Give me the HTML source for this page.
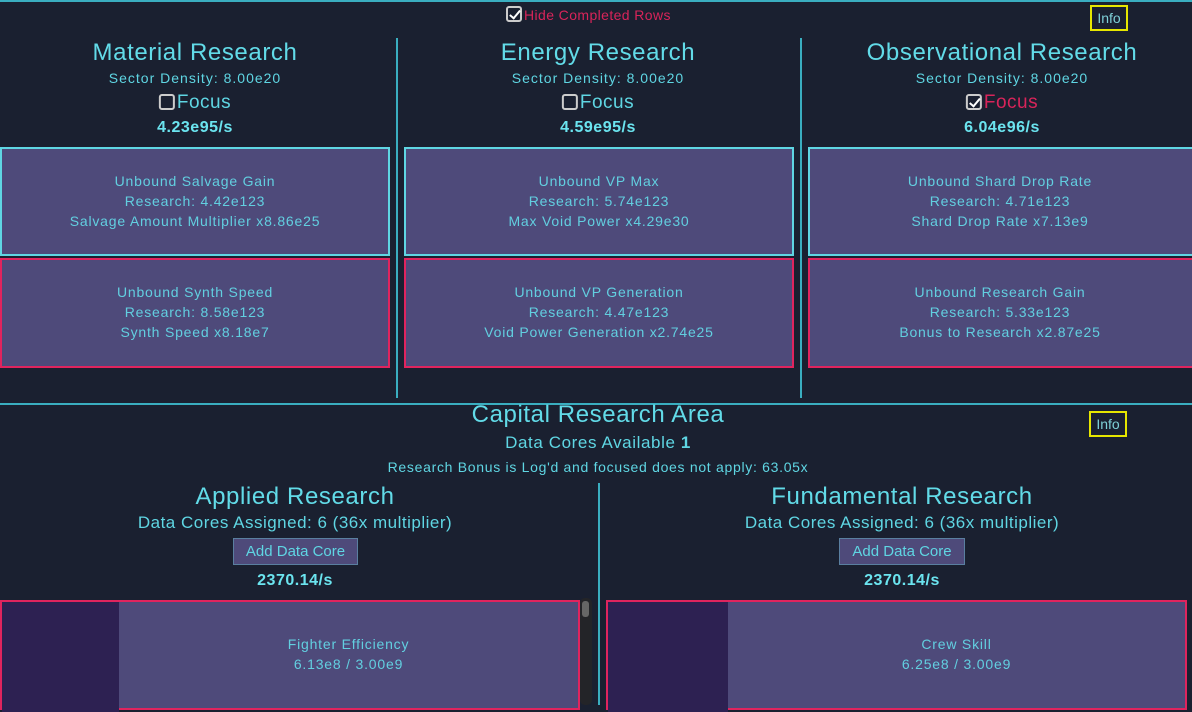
<!DOCTYPE html>
<html><head><meta charset="utf-8"><style>
*{margin:0;padding:0;box-sizing:border-box}
body{width:1192px;height:705px;overflow:hidden;background:#1a2030;font-family:"Liberation Sans",sans-serif;color:#5fd6e3;position:relative}
.a{position:absolute;white-space:nowrap}
.c{text-align:center;transform:translateX(-50%)}
.t{font-size:24px;color:#62dbe8;letter-spacing:0.6px}
.s{font-size:14px;letter-spacing:1px}
.f{font-size:19px;letter-spacing:0.5px}
.r{font-size:16px;font-weight:bold;color:#6be4ef;letter-spacing:0.5px}
.box{position:absolute;background:#4e4a7a;border:2px solid #5fd6e3;text-align:center;font-size:14px;color:#62cfe0;line-height:20px;padding-top:22px;letter-spacing:0.8px}
.red{border-color:#e0245e}
.cb{display:inline-block;width:16px;height:16px;border:2px solid #ccc;border-radius:3px;vertical-align:-2px;margin-right:2px;position:relative}
.cb.k::after{content:"";position:absolute;left:4px;top:0px;width:4px;height:9px;border:solid #fff;border-width:0 2px 2px 0;transform:rotate(40deg)}
.info{position:absolute;border:2px solid #e6e600;color:#7fd0d8;font-size:14px;text-align:center;line-height:22px}
.line{position:absolute;background:#3aaec0}
</style></head><body>
<div class="line" style="left:0;top:0;width:1192px;height:2px"></div>
<div class="a" style="left:506px;top:6px;font-size:14px;color:#d8245a;letter-spacing:0.4px"><span class="cb k"></span>Hide Completed Rows</div>
<div class="info" style="left:1090px;top:5px;width:38px;height:26px">Info</div>
<div class="line" style="left:396px;top:38px;width:2px;height:360px"></div>
<div class="line" style="left:800px;top:38px;width:2px;height:360px"></div>

<div class="a c t" style="left:195px;top:39px">Material Research</div>
<div class="a c s" style="left:195px;top:70px">Sector Density: 8.00e20</div>
<div class="a c f" style="left:195px;top:92px"><span class="cb"></span>Focus</div>
<div class="a c r" style="left:195px;top:119px">4.23e95/s</div>
<div class="box" style="left:0;top:147px;width:390px;height:109px">Unbound Salvage Gain<br>Research: 4.42e123<br>Salvage Amount Multiplier x8.86e25</div>
<div class="box red" style="left:0;top:258px;width:390px;height:110px">Unbound Synth Speed<br>Research: 8.58e123<br>Synth Speed x8.18e7</div>

<div class="a c t" style="left:598px;top:39px">Energy Research</div>
<div class="a c s" style="left:598px;top:70px">Sector Density: 8.00e20</div>
<div class="a c f" style="left:598px;top:92px"><span class="cb"></span>Focus</div>
<div class="a c r" style="left:598px;top:119px">4.59e95/s</div>
<div class="box" style="left:404px;top:147px;width:390px;height:109px">Unbound VP Max<br>Research: 5.74e123<br>Max Void Power x4.29e30</div>
<div class="box red" style="left:404px;top:258px;width:390px;height:110px">Unbound VP Generation<br>Research: 4.47e123<br>Void Power Generation x2.74e25</div>

<div class="a c t" style="left:1002px;top:39px">Observational Research</div>
<div class="a c s" style="left:1002px;top:70px">Sector Density: 8.00e20</div>
<div class="a c f" style="left:1002px;top:92px;color:#d8245a"><span class="cb k"></span>Focus</div>
<div class="a c r" style="left:1002px;top:119px">6.04e96/s</div>
<div class="box" style="left:808px;top:147px;width:390px;height:109px;padding-right:6px">Unbound Shard Drop Rate<br>Research: 4.71e123<br>Shard Drop Rate x7.13e9</div>
<div class="box red" style="left:808px;top:258px;width:390px;height:110px;padding-right:6px">Unbound Research Gain<br>Research: 5.33e123<br>Bonus to Research x2.87e25</div>

<div class="line" style="left:0;top:403px;width:1192px;height:2px"></div>
<div class="a c t" style="left:598px;top:401px">Capital Research Area</div>
<div class="a c" style="left:598px;top:433px;font-size:17px;letter-spacing:0.6px">Data Cores Available <b>1</b></div>
<div class="a c s" style="left:598px;top:459px;letter-spacing:0.7px">Research Bonus is Log'd and focused does not apply: 63.05x</div>
<div class="info" style="left:1089px;top:411px;width:38px;height:26px">Info</div>
<div class="line" style="left:598px;top:483px;width:2px;height:222px"></div>

<div class="a c t" style="left:295px;top:483px">Applied Research</div>
<div class="a c" style="left:295px;top:513px;font-size:17px;letter-spacing:0.5px">Data Cores Assigned: 6 (36x multiplier)</div>
<div class="a" style="left:233px;top:538px;width:125px;height:27px;background:#4e4a7a;border:1px solid #5a7fa0;text-align:center;line-height:25px;font-size:15px">Add Data Core</div>
<div class="a c r" style="left:295px;top:572px">2370.14/s</div>
<div class="a" style="left:0;top:600px;width:580px;height:110px;background:#4e4a7a;border:2px solid #e0245e"><div style="position:absolute;left:0;top:0;width:117px;height:110px;background:#2d2152"></div><div style="position:absolute;left:117px;right:0;top:32px;text-align:center;font-size:14px;line-height:20px;color:#62cfe0;letter-spacing:0.8px">Fighter Efficiency<br>6.13e8 / 3.00e9</div></div>
<div class="a" style="left:580px;top:598px;width:12px;height:107px;background:#232428;border-radius:5px"><div style="margin:3px 2px;width:7px;height:16px;background:#666;border-radius:3px"></div></div>

<div class="a c t" style="left:902px;top:483px">Fundamental Research</div>
<div class="a c" style="left:902px;top:513px;font-size:17px;letter-spacing:0.5px">Data Cores Assigned: 6 (36x multiplier)</div>
<div class="a" style="left:839px;top:538px;width:126px;height:27px;background:#4e4a7a;border:1px solid #5a7fa0;text-align:center;line-height:25px;font-size:15px">Add Data Core</div>
<div class="a c r" style="left:902px;top:572px">2370.14/s</div>
<div class="a" style="left:606px;top:600px;width:581px;height:110px;background:#4e4a7a;border:2px solid #e0245e"><div style="position:absolute;left:0;top:0;width:120px;height:110px;background:#2d2152"></div><div style="position:absolute;left:120px;right:0;top:32px;text-align:center;font-size:14px;line-height:20px;color:#62cfe0;letter-spacing:0.8px">Crew Skill<br>6.25e8 / 3.00e9</div></div>
</body></html>
